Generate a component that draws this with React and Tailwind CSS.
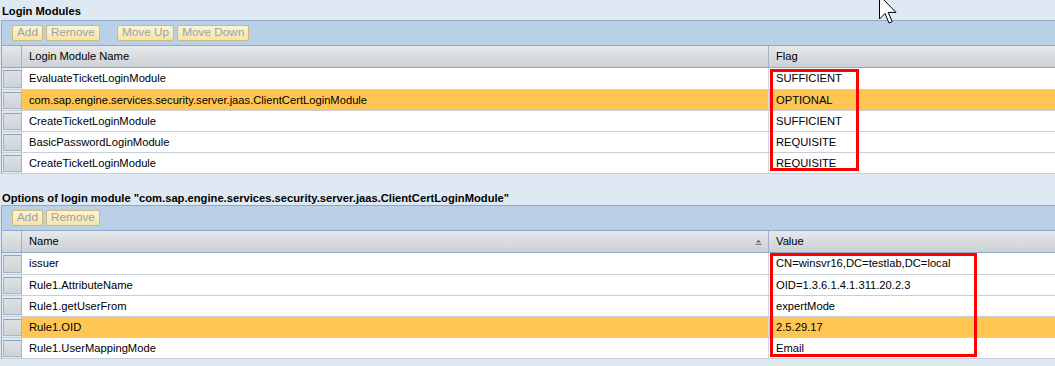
import React from 'react';

const loginModules = [
  { name: 'EvaluateTicketLoginModule', flag: 'SUFFICIENT' },
  { name: 'com.sap.engine.services.security.server.jaas.ClientCertLoginModule', flag: 'OPTIONAL', selected: true },
  { name: 'CreateTicketLoginModule', flag: 'SUFFICIENT' },
  { name: 'BasicPasswordLoginModule', flag: 'REQUISITE' },
  { name: 'CreateTicketLoginModule', flag: 'REQUISITE' },
];

const options = [
  { name: 'issuer', value: 'CN=winsvr16,DC=testlab,DC=local' },
  { name: 'Rule1.AttributeName', value: 'OID=1.3.6.1.4.1.311.20.2.3' },
  { name: 'Rule1.getUserFrom', value: 'expertMode' },
  { name: 'Rule1.OID', value: '2.5.29.17', selected: true },
  { name: 'Rule1.UserMappingMode', value: 'Email' },
];

const ToolButton = ({ children }) => (
  <button className="h-[16px] px-[4px] flex items-center rounded-[2px] border border-[#cdb97c] bg-gradient-to-b from-[#fdf4d6] to-[#f5e4ac] text-[#a0a0a0] text-[11.8px] leading-none">
    {children}
  </button>
);

const Selector = () => (
  <div className="w-[20px] shrink-0 self-stretch pl-[1px] pt-[2px] pb-[1px] pr-0">
    <div className="h-full w-full border border-[#aab5c2] border-t-[#97a3b1] bg-gradient-to-b from-[#dde0e3] to-[#cfd3d7]" />
  </div>
);

const Table = ({ groups, header, rows, sortIcon }) => (
  <div className="ml-[1px] border-t border-l border-[#90a9c7] bg-white">
    {/* toolbar */}
    <div className="h-[24px] bg-[#b9d0e7] flex items-center pl-[10px]">
      {groups.map((g, i) => (
        <div key={i} className={`flex gap-[3px] ${i > 0 ? 'ml-[17px]' : ''}`}>
          {g.map((b) => (
            <ToolButton key={b}>{b}</ToolButton>
          ))}
        </div>
      ))}
    </div>
    {/* header */}
    <div className="h-[23px] flex border-t border-b border-[#90a9c7] bg-gradient-to-b from-[#e6e8ea] to-[#cdd1d5]">
      <div className="w-[20px] shrink-0 border-r border-[#a3b1c1]" />
      <div className="w-[747px] shrink-0 flex items-center justify-between px-[7px] border-r border-[#a3b1c1]">
        <span>{header[0]}</span>
        {sortIcon && (
          <svg width="7" height="6" viewBox="0 0 7 6" className="mr-[-1px]">
            <path d="M3.5 0.5 L6 3.5 L1 3.5 Z" fill="#6d6d6d" />
            <rect x="0.5" y="4.8" width="6" height="1" fill="#6d6d6d" />
          </svg>
        )}
      </div>
      <div className="flex-1 flex items-center px-[7px]">{header[1]}</div>
    </div>
    {rows.map((r, i) => (
      <div
        key={i}
        className={`h-[21px] flex ${i > 0 ? 'border-t border-[#c6ced8]' : ''} ${r.selected ? 'bg-[#ffc654]' : 'bg-white'}`}
      >
        <div className="w-[20px] shrink-0 flex bg-[#dfe9f4] border-r border-[#c6ced8]">
          <Selector />
        </div>
        <div className="w-[747px] shrink-0 flex items-center px-[7px] border-r border-[#d3d9e0] whitespace-nowrap overflow-hidden">
          {r.name}
        </div>
        <div className="flex-1 flex items-center px-[7px] whitespace-nowrap">{r.value ?? r.flag}</div>
      </div>
    ))}
    <div className="h-px bg-[#c6ced8]" />
  </div>
);

export default function App() {
  return (
    <div
      className="relative w-[1055px] h-[366px] overflow-hidden bg-[#dfe9f4] text-[11.2px] text-black"
      style={{ fontFamily: '"Liberation Sans", Arial, sans-serif' }}
    >
      <div className="h-[20px] flex items-center pl-[2px] font-bold pt-[3px]">Login Modules</div>
      <Table
        groups={[['Add', 'Remove'], ['Move Up', 'Move Down']]}
        header={['Login Module Name', 'Flag']}
        rows={loginModules}
      />
      <div className="h-[31px] flex items-end pl-[2px] font-bold leading-[14px]">
        Options of login module "com.sap.engine.services.security.server.jaas.ClientCertLoginModule"
      </div>
      <Table groups={[['Add', 'Remove']]} header={['Name', 'Value']} rows={options} sortIcon />

      {/* red annotation boxes */}
      <div className="absolute left-[770px] top-[69px] w-[89px] h-[102px] border-[3px] border-[#ff0000]" />
      <div className="absolute left-[770px] top-[253px] w-[207px] h-[104px] border-[3px] border-[#ff0000]" />

      {/* mouse pointer */}
      <svg className="absolute left-[879px] top-[-5px]" width="20" height="30" viewBox="0 0 20 30">
        <path
          d="M0.5 0.5 L0.5 24 L6 18.5 L10 28 L13.2 26.6 L9.2 17.4 L17 17.4 Z"
          fill="#ffffff"
          stroke="#000000"
          strokeWidth="1"
          strokeLinejoin="miter"
        />
      </svg>
    </div>
  );
}
